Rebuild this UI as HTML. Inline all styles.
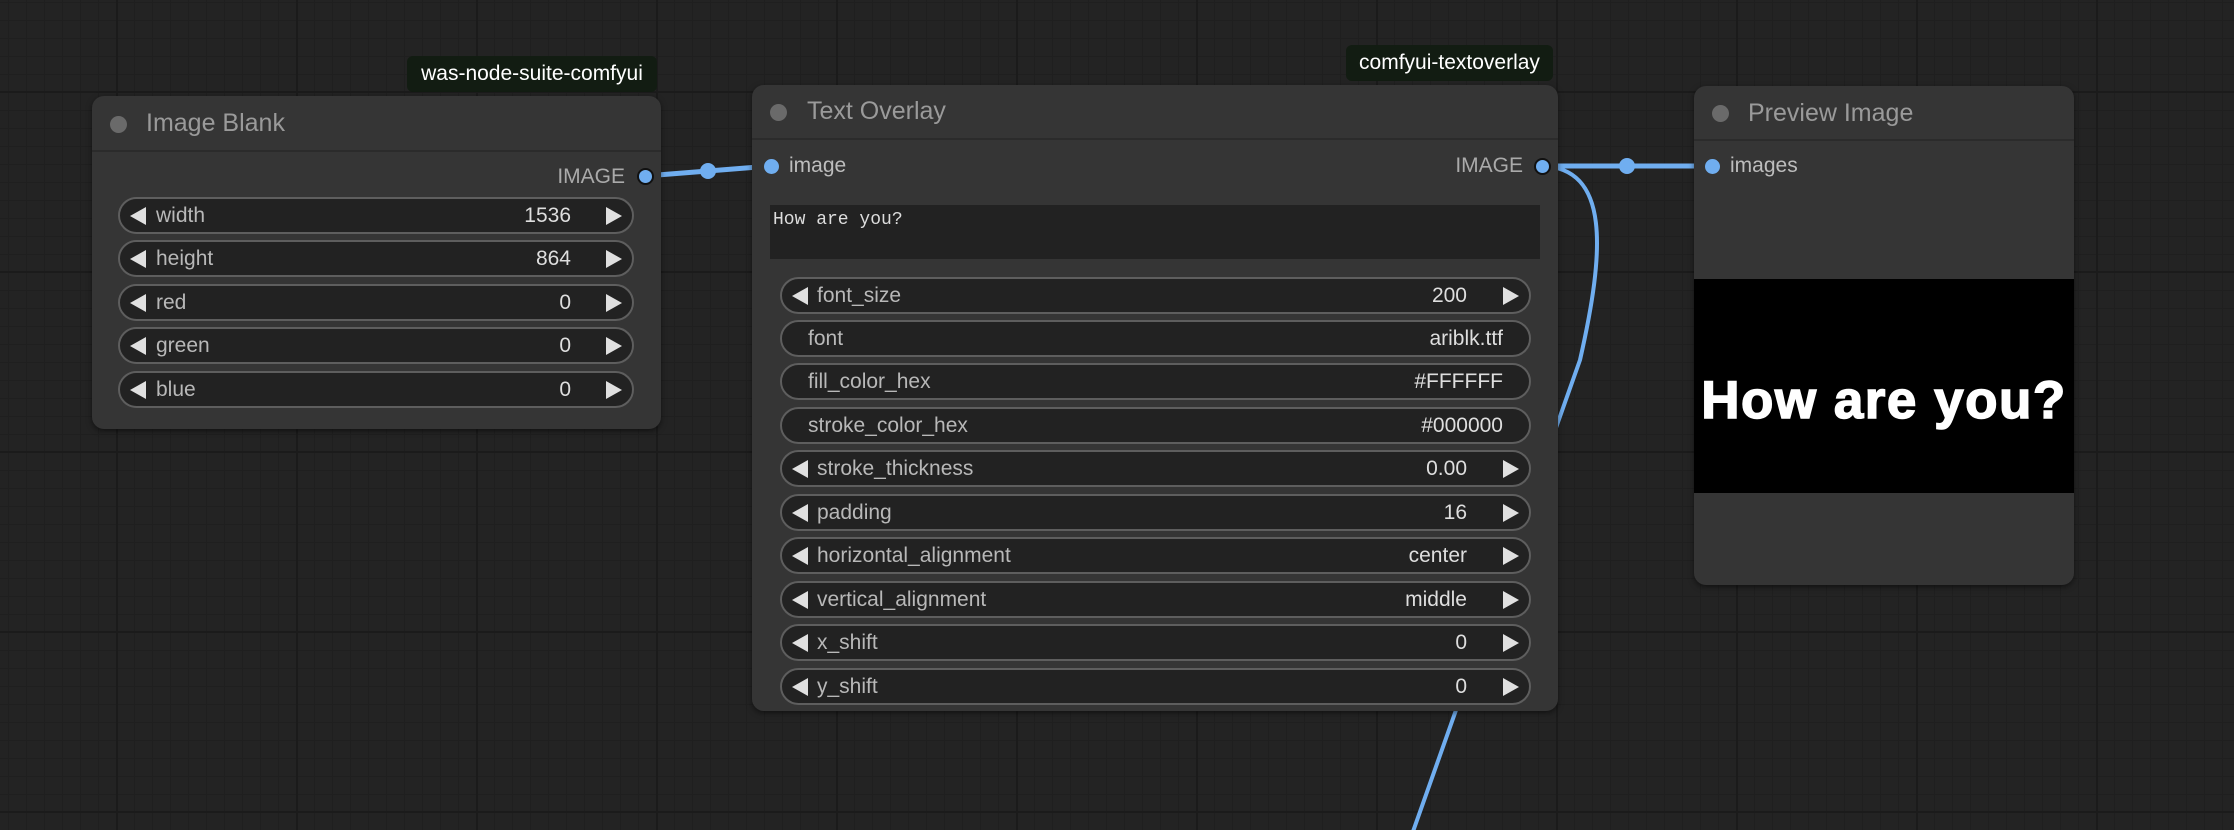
<!DOCTYPE html>
<html><head><meta charset="utf-8"><style>
*{margin:0;padding:0;box-sizing:border-box}
body{width:2234px;height:830px;overflow:hidden;position:relative;font-family:"Liberation Sans",Arial,sans-serif;
background-color:#232323;
background-image:
linear-gradient(to right,#1b1b1b 0,#1b1b1b 2px,transparent 2px),
linear-gradient(to bottom,#1b1b1b 0,#1b1b1b 2px,transparent 2px),
linear-gradient(to right,#1f1f1f 0,#1f1f1f 1px,transparent 1px),
linear-gradient(to bottom,#1f1f1f 0,#1f1f1f 1px,transparent 1px);
background-size:180px 180px,180px 180px,18px 18px,18px 18px;
background-position:116px 0,0 631px,8px 0,0 2px;}
.node{position:absolute;background:#353535;border-radius:12px;box-shadow:0 2px 6px rgba(0,0,0,.5)}
.title{position:absolute;left:0;right:0;top:0;border-bottom:2px solid #2b2b2b;color:#9a9a9a;font-size:25px}
.title .d{position:absolute;width:17px;height:17px;border-radius:50%;background:#6a6a6a}
.tag{position:absolute;background:#121c12;color:#fff;font-size:21px;border-radius:6px;display:flex;align-items:center;justify-content:center}
.w{position:absolute;background:#222;border:2px solid #5e5e5e;border-radius:20px;font-size:21px;color:#b8b8b8}
.w span{position:absolute;top:50%;transform:translateY(-50%);white-space:nowrap}
.w .v{color:#dedede}
.la,.ra{position:absolute;top:50%;transform:translateY(-50%);width:0;height:0;border-top:9px solid transparent;border-bottom:9px solid transparent}
.la{border-right:16px solid #e0e0e0}
.ra{border-left:16px solid #e0e0e0}
.dot{position:absolute;width:15px;height:15px;border-radius:50%;background:#70aef0}
.txt{position:absolute;color:#bdbdbd;font-size:21px}
</style></head><body>
<svg style="position:absolute;left:0;top:0" width="2234" height="830">
<path d="M645 176 L708 171 L771 166" stroke="#70aef0" stroke-width="5" fill="none"/>
<circle cx="708" cy="171" r="8" fill="#70aef0"/>
<path d="M1542 166 L1712 166" stroke="#70aef0" stroke-width="5" fill="none"/>
<circle cx="1627" cy="166" r="8" fill="#70aef0"/>
<path d="M1542 166 C1610 168 1605 250 1580 360 L1410 840" stroke="#70aef0" stroke-width="4" fill="none"/>
</svg>

<div class="tag" style="left:407px;top:56px;width:250px;height:36px">was-node-suite-comfyui</div>
<div class="node" style="left:92px;top:96px;width:569px;height:333px">
 <div class="title" style="height:56px"><div class="d" style="left:18px;top:20px"></div><div style="position:absolute;left:54px;top:13px">Image Blank</div></div>
</div>
<div class="txt" style="left:555px;top:165px;width:70px;text-align:right;color:#aaa">IMAGE</div>
<div class="dot" style="left:637px;top:168px;border:2px solid #111;width:17px;height:17px"></div>
<div class="w" style="left:118px;top:197px;width:516px;height:37px"><i class="la" style="left:10px"></i><span style="left:36px">width</span><span class="v" style="right:61px">1536</span><i class="ra" style="right:10px"></i></div>
<div class="w" style="left:118px;top:240px;width:516px;height:37px"><i class="la" style="left:10px"></i><span style="left:36px">height</span><span class="v" style="right:61px">864</span><i class="ra" style="right:10px"></i></div>
<div class="w" style="left:118px;top:284px;width:516px;height:37px"><i class="la" style="left:10px"></i><span style="left:36px">red</span><span class="v" style="right:61px">0</span><i class="ra" style="right:10px"></i></div>
<div class="w" style="left:118px;top:327px;width:516px;height:37px"><i class="la" style="left:10px"></i><span style="left:36px">green</span><span class="v" style="right:61px">0</span><i class="ra" style="right:10px"></i></div>
<div class="w" style="left:118px;top:371px;width:516px;height:37px"><i class="la" style="left:10px"></i><span style="left:36px">blue</span><span class="v" style="right:61px">0</span><i class="ra" style="right:10px"></i></div>

<div class="tag" style="left:1346px;top:45px;width:207px;height:36px">comfyui-textoverlay</div>
<div class="node" style="left:752px;top:85px;width:806px;height:626px">
 <div class="title" style="height:55px"><div class="d" style="left:18px;top:19px"></div><div style="position:absolute;left:55px;top:12px">Text Overlay</div></div>
</div>
<div class="dot" style="left:764px;top:159px"></div>
<div class="txt" style="left:789px;top:154px">image</div>
<div class="txt" style="left:1440px;top:154px;width:83px;text-align:right;color:#aaa">IMAGE</div>
<div class="dot" style="left:1534px;top:158px;border:2px solid #111;width:17px;height:17px"></div>
<div style="position:absolute;left:770px;top:205px;width:770px;height:54px;background:#222;color:#ddd;font-family:'Liberation Mono',monospace;font-size:18px;padding:5px 3px">How are you?</div>
<div class="w" style="left:780px;top:277px;width:751px;height:37px"><i class="la" style="left:10px"></i><span style="left:35px">font_size</span><span class="v" style="right:62px">200</span><i class="ra" style="right:10px"></i></div>
<div class="w" style="left:780px;top:320px;width:751px;height:37px"><span style="left:26px">font</span><span class="v" style="right:26px">ariblk.ttf</span></div>
<div class="w" style="left:780px;top:363px;width:751px;height:37px"><span style="left:26px">fill_color_hex</span><span class="v" style="right:26px">#FFFFFF</span></div>
<div class="w" style="left:780px;top:407px;width:751px;height:37px"><span style="left:26px">stroke_color_hex</span><span class="v" style="right:26px">#000000</span></div>
<div class="w" style="left:780px;top:450px;width:751px;height:37px"><i class="la" style="left:10px"></i><span style="left:35px">stroke_thickness</span><span class="v" style="right:62px">0.00</span><i class="ra" style="right:10px"></i></div>
<div class="w" style="left:780px;top:494px;width:751px;height:37px"><i class="la" style="left:10px"></i><span style="left:35px">padding</span><span class="v" style="right:62px">16</span><i class="ra" style="right:10px"></i></div>
<div class="w" style="left:780px;top:537px;width:751px;height:37px"><i class="la" style="left:10px"></i><span style="left:35px">horizontal_alignment</span><span class="v" style="right:62px">center</span><i class="ra" style="right:10px"></i></div>
<div class="w" style="left:780px;top:581px;width:751px;height:37px"><i class="la" style="left:10px"></i><span style="left:35px">vertical_alignment</span><span class="v" style="right:62px">middle</span><i class="ra" style="right:10px"></i></div>
<div class="w" style="left:780px;top:624px;width:751px;height:37px"><i class="la" style="left:10px"></i><span style="left:35px">x_shift</span><span class="v" style="right:62px">0</span><i class="ra" style="right:10px"></i></div>
<div class="w" style="left:780px;top:668px;width:751px;height:37px"><i class="la" style="left:10px"></i><span style="left:35px">y_shift</span><span class="v" style="right:62px">0</span><i class="ra" style="right:10px"></i></div>

<div class="node" style="left:1694px;top:86px;width:380px;height:499px">
 <div class="title" style="height:55px"><div class="d" style="left:18px;top:19px"></div><div style="position:absolute;left:54px;top:13px">Preview Image</div></div>
 <div style="position:absolute;left:0;right:0;top:193px;height:214px;background:#000;color:#fff;font-family:'Liberation Sans',Arial,sans-serif;font-weight:bold;font-size:53px;display:flex;align-items:center;justify-content:center;letter-spacing:1.5px;padding-top:28px;-webkit-text-stroke:1.5px #fff">How are you?</div>
</div>
<div class="dot" style="left:1705px;top:159px"></div>
<div class="txt" style="left:1730px;top:154px">images</div>
</body></html>
